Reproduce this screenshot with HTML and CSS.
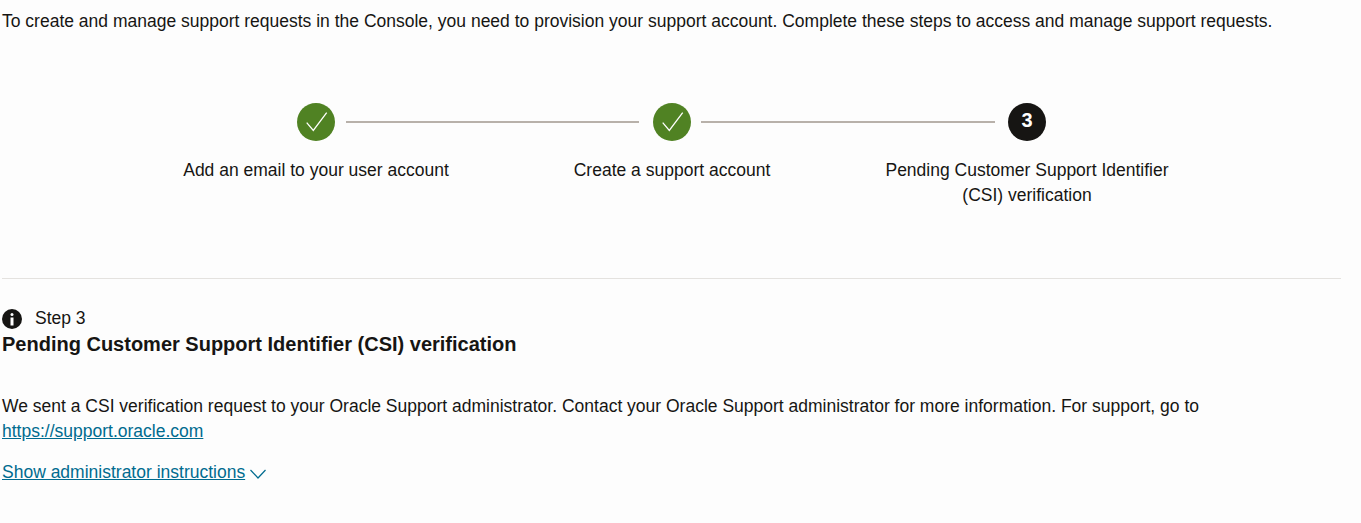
FILE: index.html
```html
<!DOCTYPE html>
<html lang="en">
<head>
<meta charset="utf-8">
<title>Support account</title>
<link rel="stylesheet" href="styles.css">
</head>
<body>
<main class="page">
  <p class="intro">To create and manage support requests in the Console, you need to provision your support account. Complete these steps to access and manage support requests.</p>
  <ol class="train">
    <li class="stop">
      <div class="track">
        <span class="badge done"><svg viewBox="0 0 24 24" width="24" height="24"><path d="M2.7 12.7 9.3 20.5 22.7 2.7" fill="none" stroke="#fff" stroke-width="1.3"/></svg></span>
      </div>
      <div class="label">Add an email to your user account</div>
    </li>
    <li class="connector"></li>
    <li class="stop">
      <div class="track">
        <span class="badge done"><svg viewBox="0 0 24 24" width="24" height="24"><path d="M2.7 12.7 9.3 20.5 22.7 2.7" fill="none" stroke="#fff" stroke-width="1.3"/></svg></span>
      </div>
      <div class="label">Create a support account</div>
    </li>
    <li class="connector second"></li>
    <li class="stop">
      <div class="track">
        <span class="badge current">3</span>
      </div>
      <div class="label">Pending Customer Support Identifier<br>(CSI) verification</div>
    </li>
  </ol>
  <hr class="rule">
  <div class="step-line">
    <svg class="info" viewBox="0 0 20 20" width="20" height="20"><circle cx="10" cy="10" r="10" fill="#161513"/><circle cx="10" cy="5.6" r="1.5" fill="#fff"/><path d="M8.5 8.5h3v8h-3z" fill="#fff"/></svg>
    <span>Step 3</span>
  </div>
  <h2 class="title">Pending Customer Support Identifier (CSI) verification</h2>
  <p class="body">We sent a CSI verification request to your Oracle Support administrator. Contact your Oracle Support administrator for more information. For support, go to <a href="#">https://support.oracle.com</a></p>
  <div class="more">
    <a href="#">Show administrator instructions</a>
    <svg class="chev" viewBox="0 0 16 10" width="16" height="10"><path d="M.5 1 8 9l7.5-8" fill="none" stroke="#006b8f" stroke-width="1.2"/></svg>
  </div>
</main>
</body>
</html>
```
FILE: styles.css
```css
* { box-sizing: border-box; }
html, body { margin: 0; background: #fdfdfd; }
body {
  font-family: "Liberation Sans", Arial, sans-serif;
  font-size: 17.5px;
  line-height: 25px;
  color: #161513;
  height: 523px;
  overflow: hidden;
}
.page { padding: 9px 20px 0 2px; }
.intro { margin: 0; width: 1340px; white-space: nowrap; }
.train {
  list-style: none;
  margin: 69px 0 0;
  padding: 0;
  display: flex;
  align-items: flex-start;
  height: 175px;
}
.stop {
  flex: 0 0 auto;
  width: 300px;
  text-align: center;
}
.stop:first-child { margin-left: 164px; }
.track { height: 38px; display: flex; justify-content: center; }
.badge {
  width: 38px;
  height: 38px;
  border-radius: 50%;
  display: flex;
  align-items: center;
  justify-content: center;
  color: #fff;
  font-size: 20px;
  font-weight: 700;
  line-height: 34px;
}
.badge.done { background: #508223; }
.badge.current { background: #161513; padding-bottom: 4px; }
.label { margin-top: 17px; }
.connector {
  flex: 0 0 293px;
  height: 2px;
  margin: 18px -117px 0 -120px;
  background: #b8b1aa;
  position: relative;
  z-index: 1;
}
.connector.second { flex-basis: 294px; margin: 18px -118px 0 -121px; }
.rule {
  margin: 0;
  width: 1339px;
  border: 0;
  border-top: 1px solid #e4e2df;
}
.step-line {
  margin-top: 27px;
  display: flex;
  align-items: center;
  gap: 13px;
  height: 25px;
}
.info { margin-top: 1px; }
.title {
  margin: 0;
  font-size: 20px;
  line-height: 26px;
  font-weight: 700;
}
.body { margin: 37px 0 0; width: 1210px; }
a { color: #006b8f; text-decoration: underline; }
.more { margin-top: 16px; display: flex; align-items: center; gap: 5px; }
.chev { margin-top: 3px; }
```
